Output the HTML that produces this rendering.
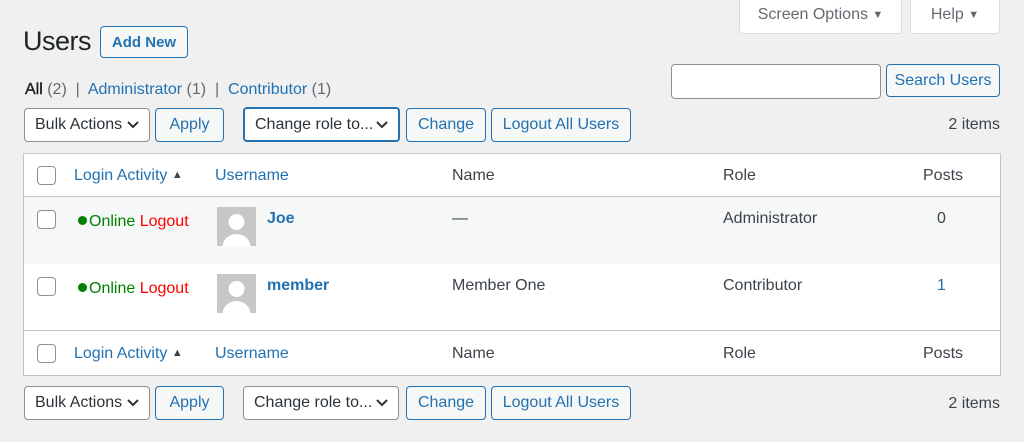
<!DOCTYPE html>
<html><head><style>
*{box-sizing:border-box;margin:0;padding:0}
body{width:1024px;height:442px;background:#f0f0f1;font-family:"Liberation Sans",sans-serif;font-size:16px;color:#3c434a;position:relative;overflow:hidden}
.a{position:absolute}
.btn{position:absolute;border:1px solid #2271b1;color:#2271b1;background:#f6f7f7;border-radius:4px;display:flex;align-items:center;justify-content:center;font-size:16px;height:34px}
.sel{position:absolute;border:1px solid #8c8f94;background:#fff;border-radius:4px;height:34px;display:flex;align-items:center;padding-left:10px;font-size:16px;color:#2c3338}
.sel svg{position:absolute;right:10px;top:12px}
.tab{position:absolute;top:-4px;height:38px;background:#fff;border:1px solid #dcdcde;border-radius:0 0 4px 4px;color:#646970;display:flex;align-items:center;justify-content:center;font-size:16px}
.cb{position:absolute;width:19px;height:19px;border:1px solid #8c8f94;border-radius:4px;background:#fff}
a,.lk{color:#2271b1;text-decoration:none}
.av{position:absolute;width:39px;height:39px;background:#c7c7c7;overflow:hidden}
.dot{display:inline-block;width:9px;height:9px;border-radius:50%;background:#008000;margin-right:2px;vertical-align:1px}
</style></head><body>
<div class="tab" style="left:739px;width:163px">Screen Options&nbsp;<span style="font-size:11px">▼</span></div>
<div class="tab" style="left:910px;width:90px">Help&nbsp;<span style="font-size:11px">▼</span></div>
<div class="a" style="left:23px;top:26px;font-size:27px;color:#1d2327;letter-spacing:-0.5px">Users</div>
<div class="btn" style="left:100px;top:26px;width:88px;height:32px;font-weight:bold;font-size:15px">Add New</div>
<div class="a" style="left:25px;top:81px;font-size:16px;color:#646970"><b style="color:#1d2327;font-weight:normal;-webkit-text-stroke:0.4px #1d2327">All</b> (2) &nbsp;|&nbsp; <span class="lk">Administrator</span> (1) &nbsp;|&nbsp; <span class="lk">Contributor</span> (1)</div>
<div class="a" style="left:671px;top:64px;width:210px;height:35px;background:#fff;border:1px solid #8c8f94;border-radius:4px"></div>
<div class="btn" style="left:886px;top:64px;width:114px;height:33px">Search Users</div>

<div class="sel" style="left:24px;top:108px;width:126px">Bulk Actions<svg width="12" height="8"><path d="M1 1l5 5 5-5" stroke="#2c3338" stroke-width="2" fill="none"/></svg></div>
<div class="btn" style="left:155px;top:108px;width:69px">Apply</div>
<div class="sel" style="left:243px;top:107px;width:157px;height:35px;border:2px solid #2271b1">Change role to...<svg width="12" height="8"><path d="M1 1l5 5 5-5" stroke="#2c3338" stroke-width="2" fill="none"/></svg></div>
<div class="btn" style="left:406px;top:108px;width:80px">Change</div>
<div class="btn" style="left:491px;top:108px;width:140px">Logout All Users</div>
<div class="a" style="right:24px;top:116px">2 items</div>

<div class="a" style="left:23px;top:153px;width:978px;height:223px;background:#fff;border:1px solid #c3c4c7"></div>
<div class="a" style="left:24px;top:196px;width:976px;height:1px;background:#c3c4c7"></div>
<div class="a" style="left:24px;top:197px;width:976px;height:67px;background:#f6f7f7"></div>
<div class="a" style="left:24px;top:330px;width:976px;height:1px;background:#c3c4c7"></div>

<div class="cb" style="left:37px;top:166px"></div>
<div class="a lk" style="left:74px;top:167px">Login Activity <span style="color:#3c434a;font-size:11px;vertical-align:2px">▲</span></div>
<div class="a lk" style="left:215px;top:167px">Username</div>
<div class="a" style="left:452px;top:167px">Name</div>
<div class="a" style="left:723px;top:167px">Role</div>
<div class="a" style="left:923px;top:167px">Posts</div>

<div class="cb" style="left:37px;top:210px"></div>
<div class="a" style="left:78px;top:213px;color:#008000"><span class="dot"></span>Online <span style="color:#f00">Logout</span></div>
<div class="av" style="left:217px;top:207px"><svg width="39" height="39"><circle cx="19.5" cy="15" r="8" fill="#fff"/><ellipse cx="19.5" cy="40" rx="14" ry="13" fill="#fff"/></svg></div>
<div class="a lk" style="left:267px;top:210px;font-weight:bold">Joe</div>
<div class="a" style="left:452px;top:210px">—</div>
<div class="a" style="left:723px;top:210px">Administrator</div>
<div class="a" style="left:937px;top:210px">0</div>

<div class="cb" style="left:37px;top:277px"></div>
<div class="a" style="left:78px;top:280px;color:#008000"><span class="dot"></span>Online <span style="color:#f00">Logout</span></div>
<div class="av" style="left:217px;top:274px"><svg width="39" height="39"><circle cx="19.5" cy="15" r="8" fill="#fff"/><ellipse cx="19.5" cy="40" rx="14" ry="13" fill="#fff"/></svg></div>
<div class="a lk" style="left:267px;top:277px;font-weight:bold">member</div>
<div class="a" style="left:452px;top:277px">Member One</div>
<div class="a" style="left:723px;top:277px">Contributor</div>
<div class="a lk" style="left:937px;top:277px">1</div>

<div class="cb" style="left:37px;top:344px"></div>
<div class="a lk" style="left:74px;top:345px">Login Activity <span style="color:#3c434a;font-size:11px;vertical-align:2px">▲</span></div>
<div class="a lk" style="left:215px;top:345px">Username</div>
<div class="a" style="left:452px;top:345px">Name</div>
<div class="a" style="left:723px;top:345px">Role</div>
<div class="a" style="left:923px;top:345px">Posts</div>

<div class="sel" style="left:24px;top:386px;width:126px">Bulk Actions<svg width="12" height="8"><path d="M1 1l5 5 5-5" stroke="#2c3338" stroke-width="2" fill="none"/></svg></div>
<div class="btn" style="left:155px;top:386px;width:69px">Apply</div>
<div class="sel" style="left:243px;top:386px;width:156px">Change role to...<svg width="12" height="8"><path d="M1 1l5 5 5-5" stroke="#2c3338" stroke-width="2" fill="none"/></svg></div>
<div class="btn" style="left:406px;top:386px;width:80px">Change</div>
<div class="btn" style="left:491px;top:386px;width:140px">Logout All Users</div>
<div class="a" style="right:24px;top:395px">2 items</div>
</body></html>
